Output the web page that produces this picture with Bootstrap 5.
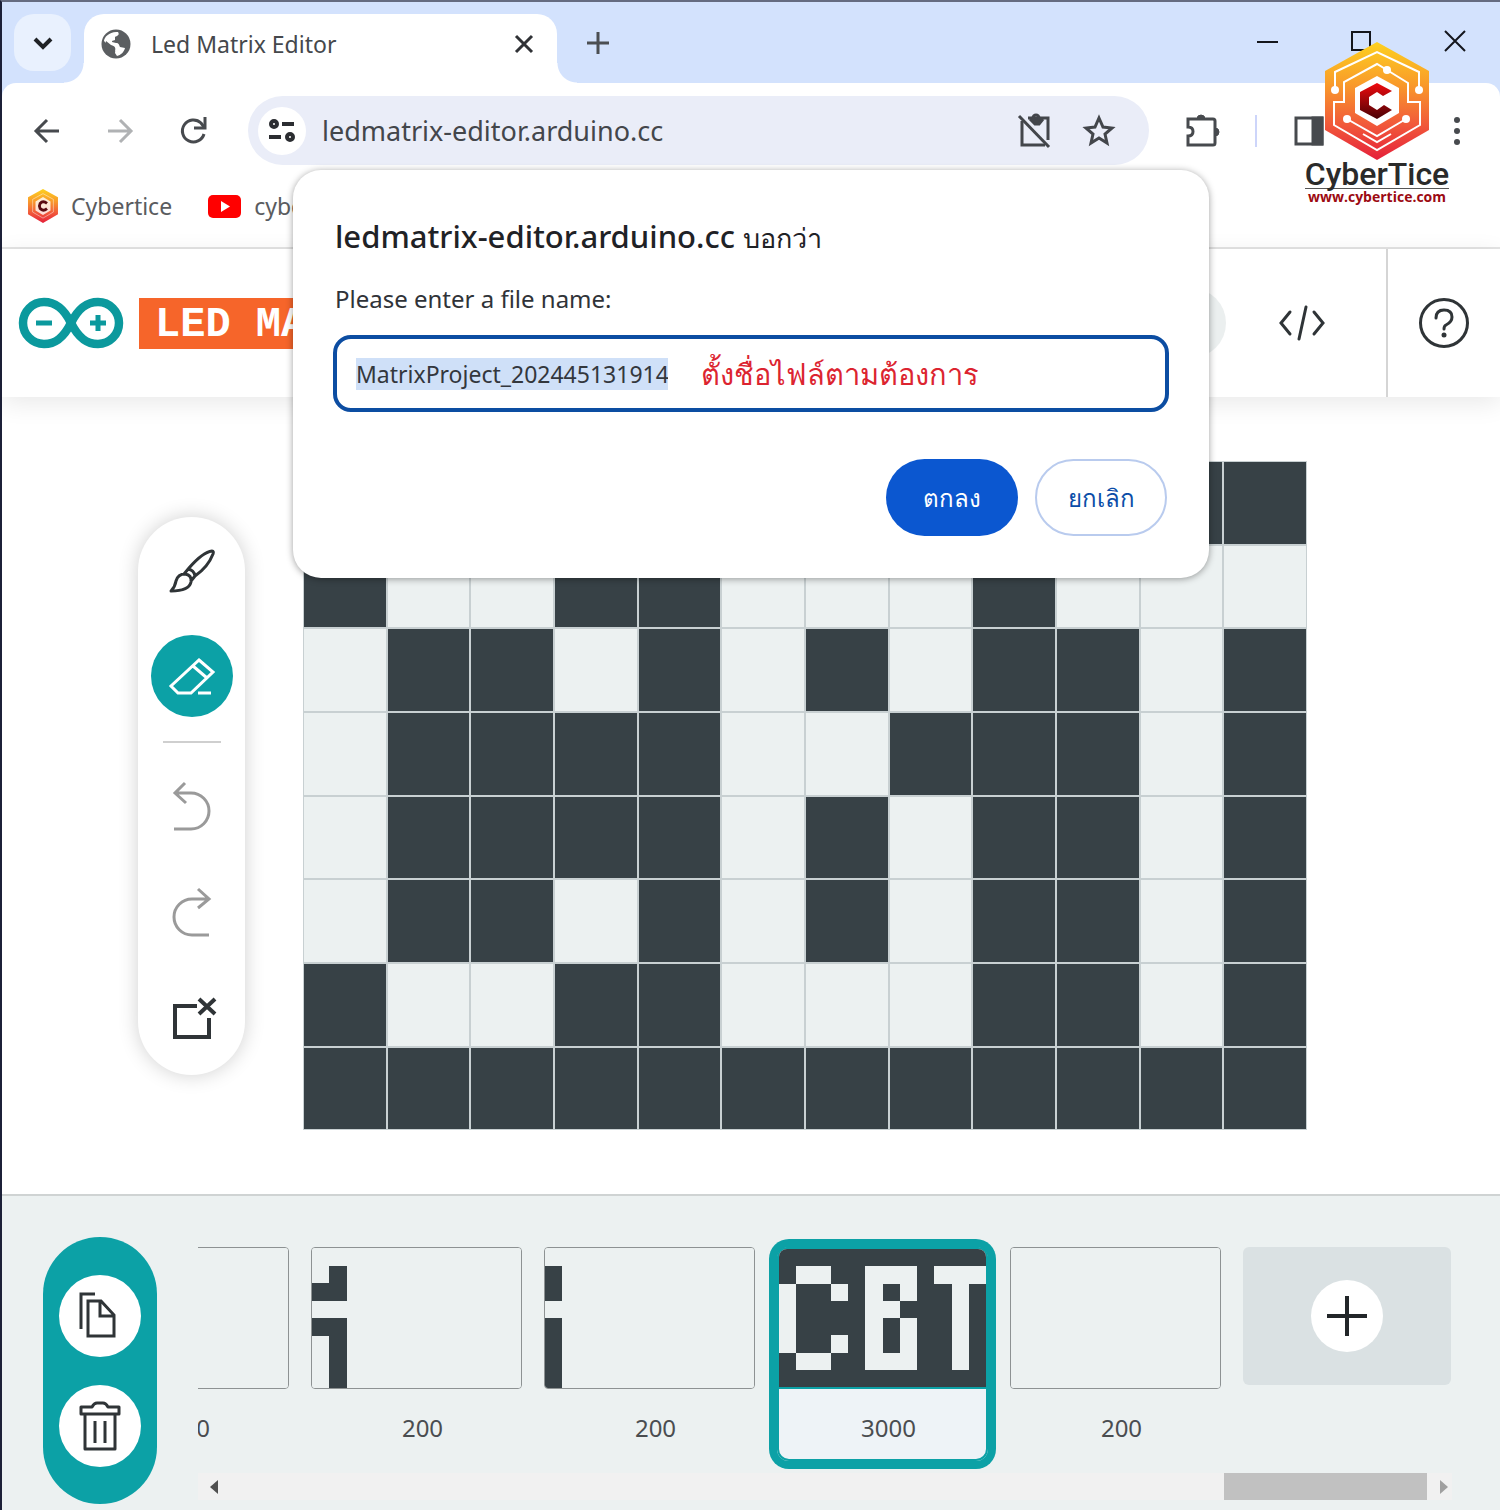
<!DOCTYPE html>
<html lang="th">
<head>
<meta charset="utf-8">
<meta name="viewport" content="width=device-width, initial-scale=1">
<title>Led Matrix Editor</title>
<link href="https://cdn.jsdelivr.net/npm/bootstrap@5.3.0/dist/css/bootstrap.min.css" rel="stylesheet">
<style>
  :root { --teal: #0ca1a6; --ink: #374146; --paper: #ecf1f1; }
  body { font-family: "Noto Sans", "Open Sans", "Liberation Sans", sans-serif; font-size: 24px; line-height: 32px; color: #1f2226; background: #fff; }
  svg { display: block; overflow: visible; }
  button svg, a svg { pointer-events: none; }
  .bare { border: 0; background: none; padding: 0; color: inherit; display: flex; align-items: center; justify-content: center; flex: none; }
  .window { min-height: 100vh; border-top: 2px solid #656b80; border-left: 2px solid #1c2038; }

  .tabstrip { background: #d3e2fd; height: 81px; padding: 12px 25px 0 12px; }
  .tab-search { width: 57px; height: 57px; border-radius: 20px; background: #e9f1fe; }
  .tab-open { width: 473px; height: 69px; margin-left: 13px; padding: 0 20px 10px 17px; background: #fff; border-radius: 20px 20px 0 0; font-size: 23px; color: #45484c; }
  .tab-open::before, .tab-open::after { content: ""; position: absolute; bottom: 0; width: 20px; height: 20px; }
  .tab-open::before { right: 100%; background: radial-gradient(circle at 0 0, transparent 19px, #fff 20px); }
  .tab-open::after { left: 100%; background: radial-gradient(circle at 100% 0, transparent 19px, #fff 20px); }
  .tab-new { width: 40px; height: 58px; margin-left: 21px; }
  .win-ctl { width: 40px; height: 54px; }
  .win-gap { gap: 54px; }

  .backing { background: #d3e2fd; }
  .toolbar { background: #fff; border-radius: 14px 14px 0 0; padding: 13px 19px 0 21px; color: #474a4e; }
  .nav-gap { gap: 25px; }
  .ext-gap { gap: 28px; }
  .icon48 { width: 48px; height: 48px; }
  .omnibox { height: 69px; margin: 0 30px 0 31px; padding: 0 26px 0 10px; border-radius: 35px; background: #eaedf8; color: #43464b; }
  .omnibox input { border: 0; background: none; color: #43464b; outline: 0; padding: 0; min-width: 0; font-size: 27px; }
  .site-info { background: #fff; border-radius: 50%; margin-right: 16px; color: #2b2d31; }
  .bar { width: 2px; height: 32px; background: #cdd5fa; }
  .overflow-menu { margin-left: 100px; }
  .bookmarks { height: 84px; border-bottom: 2px solid #e4e4e4; padding: 0 26px; color: #5a5c60; font-size: 23px; }
  .bookmarks a { color: inherit; text-decoration: none; gap: 13px; }

  .app-head { height: 148px; box-shadow: 0 6px 24px rgba(0,0,0,.09); z-index: 1; background: #fff; padding-left: 16px; }
  .app-name { background: #f6652a; color: #fff; font: bold 42px/55px "Liberation Mono", monospace; height: 51px; margin-left: 15px; padding: 0 16px; white-space: nowrap; }
  .play { width: 200px; height: 70px; border-radius: 35px; background: #ebefef; }
  .code-btn { width: 160px; }
  .help-btn { width: 114px; align-self: stretch; border-left: 2px solid #d5d5d5; }

  .stage { padding: 64px 193px 64px 136px; gap: 58px; }
  .tools { width: 107px; height: 558px; flex: none; border-radius: 54px; background: #fff; box-shadow: 0 0 20px rgba(0,0,0,.19); padding: 13px 0 15px; }
  .tool { width: 82px; height: 82px; border-radius: 50%; color: #2f3437; }
  .tool.is-on { background: var(--teal); color: #fff; }
  .tool:disabled { color: #9a9a9a; }
  .rule { width: 58px; height: 2px; background: #cfcfcf; }
  .matrix { display: grid; grid-template: repeat(8, 1fr) / repeat(12, 1fr); gap: 2px; padding: 1px; background: #c8d0d2; aspect-ratio: 3 / 2; }
  .cell { border: 0; padding: 0; background: var(--ink); }
  .cell.lit { background: var(--paper); }

  .timeline { background: var(--paper); border-top: 2px solid #cfd3d3; padding: 41px 48px 4px 41px; gap: 41px; }
  .actions { width: 114px; height: 267px; border-radius: 57px; background: var(--teal); flex: none; gap: 28px; }
  .action { width: 82px; height: 82px; border-radius: 50%; background: #fff; color: #2f3437; }
  .strip { min-width: 0; }
  .frames { overflow: hidden; padding: 10px 1px 0 0; gap: 22px; height: 236px; }
  .frame { width: 211px; height: 214px; flex-direction: column; justify-content: flex-start; font-size: 24px; color: #4a4d50; }
  .frame svg { width: 211px; height: 142px; border: 1px solid #8d9293; border-radius: 4px; margin-bottom: 23px; overflow: hidden; }
  .frame span { padding-left: 12px; }
  .frame.chosen { box-shadow: 0 0 0 8px var(--teal), inset 0 0 0 2px var(--teal); border-radius: 12px; background: #eef3f7; }
  .frame.chosen svg { border: 2px solid var(--teal); border-radius: 10px 10px 0 0; }
  .add-frame { width: 208px; height: 138px; border-radius: 6px; background: #dae1e3; }
  .add-dot { width: 72px; height: 72px; border-radius: 50%; background: #fff; }
  .scroller { height: 27px; background: #f1f1f1; padding: 0 4px 0 12px; }
  .thumb { width: 203px; height: 27px; background: #c1c1c1; margin: 0 13px 0 auto; }

  .prompt { top: 168px; left: 50%; width: 916px; transform: translateX(-50%); z-index: 5; background: #fff; border-radius: 28px; padding: 48px 42px 42px; box-shadow: 0 1px 7px rgba(0,0,0,.38); font-size: 24px; }
  .prompt h1 { font-size: 31px; line-height: 36px; font-weight: 500; margin: 0 0 27px; }
  .prompt h1 span { font-weight: 400; font-size: 27px; }
  .prompt label { display: block; margin-bottom: 20px; line-height: 32px; color: #303338; }
  .field { height: 77px; margin: 0 -2px; border: 4px solid #0c4da2; border-radius: 18px; padding: 0 19px; gap: 33px; }
  .field input { width: 312px; height: 32px; border: 0; padding: 0; background: #cfe0f8; color: #33373d; font-size: 23px; outline: 0; }
  .note { color: #dc2430; font-size: 29px; font-weight: 500; white-space: nowrap; }
  .prompt footer { gap: 17px; margin-top: 47px; }
  .pill { width: 132px; height: 77px; border-radius: 39px; font-size: 24px; padding: 0; }
  .pill-ok { background: #0b57d0; color: #fff; }
  .pill-no { background: #fff; color: #0b4da8; border: 2px solid #b9cbee; }

  .brand { top: 40px; right: 50px; z-index: 6; width: 146px; }
  .brand-name { font: 500 32px/28px Roboto, sans-serif; color: #2a2a2a; border-bottom: 1px solid #555; }
  .brand-url { font: bold 14px/16px "Open Sans", sans-serif; color: #9c0a12; }
</style>
</head>
<body>
<div class="window d-flex flex-column position-relative">

  <header>
    <div class="tabstrip d-flex align-items-start">
      <button class="bare tab-search" aria-label="Search tabs"><svg width="18" height="10" fill="none" stroke="#1f2226" stroke-width="4"><path d="M1 1l8 8 8-8"/></svg></button>
      <div class="tab-open position-relative d-flex align-items-center">
        <svg width="30" height="30" viewBox="0 0 30 30"><circle cx="15" cy="15" r="14.500" fill="#5b5e61"/><path d="M17 3c2 3-1 4-3 5v3c-2 1-3 0-3 2l4 1c3 0 3 2 4 4l5 1c-1 4-4 7-8 8l-2-3c1-3-1-4-4-5l-7-7C3 8 9 2 17 3z" fill="#fff"/><path d="M5 12l5 4c4 1 5 3 4 6v4C7 26 3 19 5 12z" fill="#5b5e61"/></svg>
        <span class="ms-3 ps-1">Led Matrix Editor</span>
        <button class="bare ms-auto" aria-label="Close tab"><svg width="26" height="26" fill="none" stroke="#303236" stroke-width="3"><path d="M5 5l16 16M21 5L5 21"/></svg></button>
      </div>
      <button class="bare tab-new" aria-label="New tab"><svg width="22" height="22" stroke="#4b4e52" stroke-width="3"><path d="M11 0v22M0 11h22"/></svg></button>
      <div class="d-flex ms-auto win-gap">
        <button class="bare win-ctl" aria-label="Minimize"><svg width="21" height="20" stroke="#14161c" stroke-width="2"><path d="M0 11h21"/></svg></button>
        <button class="bare win-ctl" aria-label="Maximize"><svg width="20" height="20" fill="none" stroke="#14161c" stroke-width="2"><path d="M1 1h18v18H1z"/></svg></button>
        <button class="bare win-ctl" aria-label="Close"><svg width="20" height="20" stroke="#14161c" stroke-width="2"><path d="M0 0l20 20M20 0L0 20"/></svg></button>
      </div>
    </div>

    <div class="backing">
      <div class="toolbar d-flex align-items-center">
        <div class="d-flex nav-gap">
          <button class="bare icon48" aria-label="Back"><svg width="26" height="24" fill="none" stroke="currentColor" stroke-width="3"><path d="M25 12H3M13 1L2 12l11 11"/></svg></button>
          <button class="bare icon48" aria-label="Forward"><svg width="26" height="24" fill="none" stroke="#b0b2b4" stroke-width="3"><path d="M1 12h22M13 1l11 11-11 11"/></svg></button>
          <button class="bare icon48" aria-label="Reload"><svg width="28" height="28" fill="none" stroke="currentColor" stroke-width="3"><path d="M25 17a11 11 0 1 1-3-11l3 4"/><path d="M26 0v11H15"/></svg></button>
        </div>
        <div class="omnibox d-flex align-items-center flex-grow-1">
          <button class="bare icon48 site-info" aria-label="Site information"><svg width="28" height="26" fill="none" stroke="currentColor" stroke-width="4"><circle cx="6" cy="6" r="3"/><path d="M14 6h12M1 19h12"/><circle cx="22" cy="19" r="3"/></svg></button>
          <input class="flex-grow-1" type="text" aria-label="Address" value="ledmatrix-editor.arduino.cc">
          <button class="bare icon48" aria-label="Clipboard blocked"><svg width="34" height="36" fill="none" stroke="currentColor" stroke-width="3"><path d="M4 8v24h23M10 5h20v22"/><path d="M12 6l5 5h4l4-5" fill="currentColor"/><circle cx="18" cy="5" r="3"/><path d="M1 3l30 31"/></svg></button>
          <button class="bare icon48 ms-3" aria-label="Bookmark this tab"><svg width="32" height="31" fill="none" stroke="currentColor" stroke-width="3"><path d="M16 3l4 9 9 1-7 6 2 9-8-5-8 5 2-9-7-6 9-1z"/></svg></button>
        </div>
        <div class="d-flex align-items-center ext-gap">
          <button class="bare icon48" aria-label="Extensions"><svg width="36" height="36" fill="none" stroke="currentColor" stroke-width="3"><path d="M3 6h25q2 0 2 2v22q0 2-2 2H3v-9q5 0 5-4.500T3 14z"/><path d="M12 6q0-4 4-4t4 4zM30 15q4 0 4 4t-4 4z" fill="currentColor" stroke-width="1"/></svg></button>
          <span class="bar"></span>
          <button class="bare icon48" aria-label="Side panel"><svg width="30" height="30" fill="none" stroke="currentColor" stroke-width="3"><path d="M2 2h26v26H2z"/><path d="M19 2h9v26h-9z" fill="currentColor"/></svg></button>
        </div>
        <button class="bare icon48 overflow-menu" aria-label="Menu"><svg width="6" height="30" fill="currentColor"><circle cx="3" cy="4" r="3"/><circle cx="3" cy="15" r="3"/><circle cx="3" cy="26" r="3"/></svg></button>
      </div>
    </div>

    <nav class="bookmarks d-flex align-items-center gap-4 bg-white">
      <a href="#" class="d-flex align-items-center"><svg width="30" height="34" viewBox="0 0 104 118"><path d="M52 0l52 29v59l-52 30L0 88V29z" fill="url(#sun)"/><path d="M52 16l36 20v44L52 101 16 80V36z" fill="none" stroke="#fff" stroke-width="3" opacity=".5"/><path d="M52 28l26 15v32L52 90 26 75V43z" fill="#fff" opacity=".8"/><path d="M66 50q-14-11-24 0-5 9 0 18 10 11 24 0" fill="none" stroke="#5a0a10" stroke-width="10"/></svg><span>Cybertice</span></a>
      <a href="#" class="d-flex align-items-center ms-2 ps-1"><svg width="33" height="23"><rect width="33" height="23" rx="5" fill="#f00"/><path d="M13 6l9 5.500-9 5.500z" fill="#fff"/></svg><span>cybertice</span></a>
    </nav>
  </header>

  <section class="app-head d-flex align-items-center position-relative">
    <svg width="106" height="52" viewBox="0 0 106 52" fill="none" stroke="#0b999d" stroke-width="8.500"><path d="M53 26C46 12 38 5 26 5a21 21 0 0 0 0 42c12 0 20-7 27-21 7-14 15-21 27-21a21 21 0 0 1 0 42c-12 0-20-7-27-21z"/><path d="M18 26h16M72 26h16M80 18v16" stroke-width="5"/></svg>
    <div class="app-name">LED MATRIX</div>
    <button class="bare play ms-auto" aria-label="Play"></button>
    <button class="bare code-btn ps-2 pe-3" aria-label="Code"><svg width="46" height="36" fill="none" stroke="#2f3437" stroke-width="3" stroke-linecap="round"><path d="M11 7L2 18l9 11M35 7l9 11-9 11M27 2l-7 32"/></svg></button>
    <button class="bare help-btn" aria-label="Help"><svg width="50" height="50" fill="none" stroke="#2f3437" stroke-width="3"><circle cx="25" cy="25" r="23.500"/><path d="M17 20q0-8 8-8t8 7q0 5-6 8-2 1-2 4" stroke-linecap="round"/><circle cx="25" cy="37" r="2.500" fill="#2f3437" stroke="none"/></svg></button>
  </section>

  <main class="stage d-flex align-items-center">
    <div class="tools d-flex flex-column align-items-center justify-content-between">
      <button class="bare tool" aria-label="Brush"><svg width="44" height="44" fill="none" stroke="currentColor" stroke-width="3" stroke-linejoin="round"><path d="M1 42q4-4 5-10 2-7 9-7 7 1 6 8-2 9-20 9zM14 25l5-6Q33 3 42 2q2 0 1 3-5 13-18 22l-4 5M18 20q6 1 7 7"/></svg></button>
      <button class="bare tool is-on" aria-label="Eraser"><svg width="46" height="42" fill="none" stroke="currentColor" stroke-width="3"><path d="M30 5l14 12-22 21H9l-7-7zM24 11l14 12M29 38h13"/></svg></button>
      <span class="rule"></span>
      <button class="bare tool" disabled aria-label="Undo"><svg width="40" height="50" fill="none" stroke="currentColor" stroke-width="3"><path d="M13 1L3 11l11 10M3 11h16a18 18 0 0 1 0 36H2"/></svg></button>
      <button class="bare tool" disabled aria-label="Redo"><svg width="40" height="50" fill="none" stroke="currentColor" stroke-width="3"><path d="M26 1l11 10-11 9M37 11H20a18 18 0 0 0 0 36h17"/></svg></button>
      <button class="bare tool" aria-label="Clear frame"><svg width="44" height="44" fill="none" stroke="currentColor" stroke-width="4"><path d="M27 9H5v31h34V21M29 2l16 15M45 2L29 17"/></svg></button>
    </div>
    <div class="matrix flex-grow-1" id="matrix"></div>
  </main>

  <section class="timeline d-flex flex-grow-1 align-items-start">
    <div class="actions d-flex flex-column align-items-center justify-content-center">
      <button class="bare action" aria-label="Duplicate frame"><svg width="42" height="50" fill="none" stroke="currentColor" stroke-width="3"><path d="M2 38V3h14M9 10h13l13 14v21H9zM21 10v15h14"/></svg></button>
      <button class="bare action" aria-label="Delete frame"><svg width="42" height="50" fill="none" stroke="currentColor" stroke-width="3" stroke-linejoin="round"><path d="M2 6h11q2-4 5-4h6q3 0 5 4h11v7H2zM6 13h30v35H6zM16 20v22M26 20v22"/></svg></button>
    </div>
    <div class="strip flex-grow-1">
      <div class="frames d-flex justify-content-end" id="frames">
        <button class="bare add-frame" id="add" aria-label="Add frame"><span class="add-dot d-flex align-items-center justify-content-center"><svg width="40" height="40" stroke="#222629" stroke-width="4"><path d="M20 0v40M0 20h40"/></svg></span></button>
      </div>
      <div class="scroller d-flex align-items-center">
        <svg width="8" height="14"><path d="M8 0v14L0 7z" fill="#505050"/></svg>
        <span class="thumb"></span>
        <svg width="8" height="14"><path d="M0 0v14l8-7z" fill="#a0a0a0"/></svg>
      </div>
    </div>
  </section>

  <form class="prompt position-absolute" role="dialog" aria-labelledby="origin">
    <h1 id="origin">ledmatrix-editor.arduino.cc <span>บอกว่า</span></h1>
    <label for="filename">Please enter a file name:</label>
    <div class="field d-flex align-items-center">
      <input id="filename" type="text" value="MatrixProject_202445131914">
      <span class="note">ตั้งชื่อไฟล์ตามต้องการ</span>
    </div>
    <footer class="d-flex justify-content-end">
      <button type="button" class="btn pill pill-ok">ตกลง</button>
      <button type="button" class="btn pill pill-no">ยกเลิก</button>
    </footer>
  </form>

  <div class="brand position-absolute d-flex flex-column align-items-center">
    <svg width="104" height="118" viewBox="0 0 104 118">
      <defs>
        <linearGradient id="sun" x1="0" y1="0" x2="0" y2="1"><stop offset="0" stop-color="#fdd11f"/><stop offset=".35" stop-color="#f99c2a"/><stop offset=".7" stop-color="#f1593a"/><stop offset="1" stop-color="#e5203a"/></linearGradient>
        <linearGradient id="blood" x1="0" y1="0" x2="0" y2="1"><stop offset="0" stop-color="#f00a0e"/><stop offset="1" stop-color="#4a0205"/></linearGradient>
      </defs>
      <path d="M52 0l52 29v59l-52 30L0 88V29z" fill="url(#sun)"/>
      <path d="M10 48V30L52 10l42 20v18M62 28l21 13v19h12v23l-43 25L9 83V60h10V40l33-18 10 6M22 77l30 17 29-17M38 92l14 8 14-8" fill="none" stroke="#fff" stroke-width="2"/>
      <g fill="#fff"><circle cx="10" cy="48" r="4"/><circle cx="94" cy="48" r="4"/><circle cx="62" cy="28" r="4"/><circle cx="22" cy="77" r="4"/><circle cx="81" cy="77" r="4"/><path d="M52 34l22 12v25L52 84 30 71V46z"/></g>
      <path d="M52 41l15 8-9 5-6-4-8 5v8l8 5 7-5 8 5-15 9-17-9V50z" fill="url(#blood)"/>
    </svg>
    <div class="brand-name">CyberTice</div>
    <a class="brand-url text-decoration-none" href="#">www.cybertice.com</a>
  </div>
</div>

<script src="https://cdn.jsdelivr.net/npm/bootstrap@5.3.0/dist/js/bootstrap.bundle.min.js"></script>
<script>
  // 1 = lit LED, 0 = dark LED, one string for each row
  const cbt = ["000000000000","011001110111","100101010010","100001100010","100001010010","100101010010","011001110010","000000000000"];
  const blank = Array(8).fill("111111111111");
  const tailWide = ["111111111111","101111111111","001111111111","111111111111","001111111111","101111111111","101111111111","101111111111"];
  const tailThin = ["111111111111","011111111111","011111111111","111111111111","011111111111","011111111111","011111111111","011111111111"];

  const matrix = document.getElementById("matrix");
  cbt.forEach((row, r) => [...row].forEach((v, c) => {
    const b = document.createElement("button");
    b.className = v === "1" ? "cell lit" : "cell";
    b.setAttribute("aria-label", `LED ${r + 1}, ${c + 1}`);
    matrix.append(b);
  }));

  const picture = rows => `<svg viewBox="0 0 12 8" preserveAspectRatio="none" shape-rendering="crispEdges"><path fill="#ecf1f1" d="M0 0h12v8H0z"/><path fill="#374146" d="${
    rows.flatMap((row, y) => [...row].map((v, x) => v === "0" ? `M${x} ${y}h1v1h-1z` : "")).join("")}"/></svg>`;
  const add = document.getElementById("add");
  [[blank, 200], [tailWide, 200], [tailThin, 200], [cbt, 3000, true], [blank, 200]].forEach(([rows, ms, chosen]) => {
    const f = document.createElement("button");
    f.className = "bare frame" + (chosen ? " chosen" : "");
    f.innerHTML = picture(rows) + `<span>${ms}</span>`;
    add.before(f);
  });
</script>
</body>
</html>
